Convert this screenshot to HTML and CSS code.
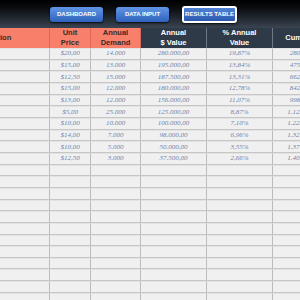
FILE: index.html
```html
<!DOCTYPE html>
<html lang="en">
<head>
    <meta charset="UTF-8">
    <title>Results Table</title>
    <link rel="stylesheet" href="styles.css">
</head>
<body>
    <div class="topbar">
        <a class="nav-btn" href="#">DASHBOARD</a>
        <a class="nav-btn" href="#">DATA INPUT</a>
        <a class="nav-btn active" href="#">RESULTS TABLE</a>
    </div>

    <div class="sheet">
        <table class="results">
            <colgroup>
                <col class="c-desc">
                <col class="c-price">
                <col class="c-demand">
                <col class="c-wide">
                <col class="c-wide">
                <col class="c-wide">
            </colgroup>
            <thead>
                <tr>
                    <th class="in left">Description</th>
                    <th class="in">Unit<br>Price</th>
                    <th class="in">Annual<br>Demand</th>
                    <th class="out">Annual<br>$ Value</th>
                    <th class="out">% Annual<br>Value</th>
                    <th class="out">Cumulative</th>
                </tr>
            </thead>
            <tbody id="rows"></tbody>
        </table>
    </div>

    <script>
        const data = [
            ['$20,00', '14.000', '280.000,00', '19,87%', '280.000,00'],
            ['$15,00', '13.000', '195.000,00', '13,84%', '475.000,00'],
            ['$12,50', '15.000', '187.500,00', '13,31%', '662.500,00'],
            ['$15,00', '12.000', '180.000,00', '12,78%', '842.500,00'],
            ['$13,00', '12.000', '156.000,00', '11,07%', '998.500,00'],
            ['$5,00', '25.000', '125.000,00', '8,87%', '1.123.500,00'],
            ['$10,00', '10.000', '100.000,00', '7,10%', '1.223.500,00'],
            ['$14,00', '7.000', '98.000,00', '6,96%', '1.321.500,00'],
            ['$10,00', '5.000', '50.000,00', '3,55%', '1.371.500,00'],
            ['$12,50', '3.000', '37.500,00', '2,66%', '1.409.000,00']
        ];
        const body = document.getElementById('rows');
        for (let i = 0; i < 22; i++) {
            const tr = document.createElement('tr');
            const row = data[i] || ['', '', '', '', ''];
            tr.appendChild(document.createElement('td'));
            row.forEach(v => {
                const td = document.createElement('td');
                td.textContent = v;
                tr.appendChild(td);
            });
            body.appendChild(tr);
        }
    </script>
</body>
</html>
```

FILE: styles.css
```css
body {
    margin: 0;
    background: #f0f0f0;
    font-family: "Liberation Sans", Arial, sans-serif;
    overflow: hidden;
}

.topbar {
    height: 28px;
    display: flex;
    align-items: center;
    gap: 13px;
    padding-left: 50px;
    background: linear-gradient(#000 0%, #0b0d10 30%, #3a4451 100%);
    box-sizing: border-box;
}

.nav-btn {
    display: flex;
    align-items: center;
    justify-content: center;
    width: 53px;
    height: 15px;
    box-sizing: border-box;
    border-radius: 3px;
    background: linear-gradient(#6196e6, #2f62bd);
    box-shadow: 0 1px 2px rgba(0, 0, 0, 0.8);
    color: #fff;
    font-size: 6px;
    font-weight: bold;
    text-decoration: none;
}

.nav-btn.active {
    width: 55px;
    height: 17px;
    border: 2px solid #fff;
    background: linear-gradient(#4f82d6, #2a58ae);
}

.sheet {
    overflow: hidden;
}

.results {
    margin-left: -34px;
    border-collapse: separate;
    border-spacing: 0;
    table-layout: fixed;
    width: 373px;
}

.c-desc { width: 84px; }
.c-price { width: 41px; }
.c-demand { width: 50px; }
.c-wide { width: 66px; }

.results th {
    height: 20px;
    padding: 0;
    font-size: 7.5px;
    font-weight: bold;
    line-height: 10px;
    text-align: center;
    vertical-align: middle;
    white-space: nowrap;
}

.results th.in {
    background: #f8806b;
    color: #3b2a26;
    border-right: 1px solid #d9685a;
}

.results th.left {
    text-align: left;
    padding-left: 4px;
}

.results th.out {
    background: #2f3a48;
    color: #fff;
    border-right: 1px solid #6f7884;
}

.results td {
    height: 9.67px;
    padding: 0;
    border-top: 1px solid #e3e3e3;
    border-bottom: 1px solid #c6c6c6;
    border-right: 1px solid #bcbcbc;
    background: #f0f0f0;
    color: #6f82ab;
    font-family: "Liberation Serif", "Times New Roman", serif;
    font-style: italic;
    font-size: 7px;
    text-align: center;
    line-height: 9px;
    white-space: nowrap;
}
```
